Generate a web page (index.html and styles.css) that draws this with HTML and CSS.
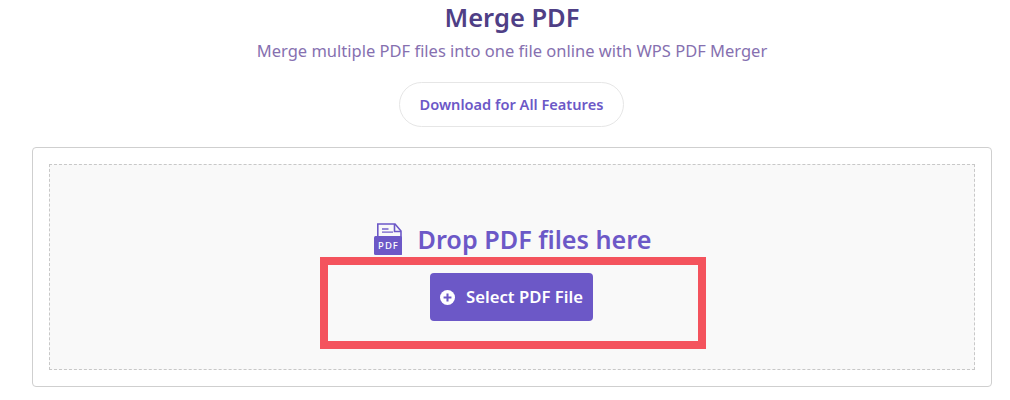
FILE: index.html
```html
<!DOCTYPE html>
<html lang="en">
<head>
<meta charset="utf-8">
<title>Merge PDF</title>
<link rel="stylesheet" href="styles.css">
</head>
<body>
<main class="page">
  <header class="intro">
    <h1 class="title">Merge PDF</h1>
    <p class="subtitle">Merge multiple PDF files into one file online with WPS PDF Merger</p>
    <a class="download" href="#">Download for All Features</a>
  </header>
  <section class="card">
    <div class="dropzone">
      <div class="drop-label">
        <svg class="pdf-icon" viewBox="0 0 28 33" aria-hidden="true">
          <path d="M3.800 14V1h17.200l6 7v24" fill="none" stroke="#6c58c7" stroke-width="1.600"/>
          <path d="M20.500 1v7.500h6.500" fill="none" stroke="#6c58c7" stroke-width="1.600"/>
          <rect x="8" y="5.300" width="6.500" height="1.400" fill="#6c58c7"/>
          <rect x="8" y="8.500" width="11" height="1.200" fill="#6c58c7"/>
          <rect x="0" y="13" width="28" height="19" rx="1.500" fill="#6c58c7"/>
          <text x="14.500" y="25.800" class="pdf-text" text-anchor="middle">PDF</text>
        </svg>
        <span class="drop-text">Drop PDF files here</span>
      </div>
      <button class="select" type="button">
        <svg class="plus" viewBox="0 0 16 16" aria-hidden="true">
          <circle cx="8" cy="8" r="8" fill="#fff"/>
          <path d="M8 3.800v8.400M3.800 8h8.400" stroke="#6c58c7" stroke-width="2.200"/>
        </svg>
        Select PDF File
      </button>
    </div>
    <div class="highlight"></div>
  </section>
</main>
</body>
</html>
```
FILE: styles.css
```css
* { box-sizing: border-box; }
html, body { margin: 0; height: 400px; overflow: hidden; background: #fff; }
body { font-family: "Noto Sans", "Open Sans", sans-serif; }
.page { width: 960px; margin-left: 32px; }
.intro { display: flex; flex-direction: column; align-items: center; height: 147px; }
.title { margin: 0; font-size: 25.500px; line-height: 34px; font-weight: 600; color: #4f3f86; }
.subtitle { margin: 5px 0 0; font-size: 16.500px; line-height: 24px; color: #8670b0; font-weight: 400; }
.download {
  display: flex; align-items: center; justify-content: center;
  width: 225px; height: 45px; margin: 19px 1px 0 0; padding-bottom: 2px;
  border: 1px solid #e6e6e6; border-radius: 23px;
  font-size: 14.600px; font-weight: 600; color: #6c58c7; text-decoration: none;
}
.card {
  position: relative;
  height: 240px; padding: 16px;
  border: 1px solid #cfcfcf; border-radius: 4px;
}
.dropzone {
  display: flex; flex-direction: column; align-items: center;
  height: 206px; padding-top: 56px;
  background: #f9f9f9; border: 1px dashed #c8c8c8;
}
.drop-label { display: flex; align-items: center; gap: 15px; height: 36px; margin-left: 2px; }
.pdf-icon { width: 28px; height: 33px; }
.pdf-text { font-size: 9.500px; font-weight: 500; letter-spacing: 1px; fill: #fff; font-family: "Noto Sans", sans-serif; }
.drop-text { font-size: 25.200px; font-weight: 600; color: #6c58c7; line-height: 36px; }
.select {
  display: flex; align-items: center; gap: 11px;
  width: 163px; height: 48px; margin: 16px 1px 0 0; padding: 0 0 2px 10px;
  border: 0; border-radius: 4px; background: #6c58c7; color: #fff;
  font-family: inherit; font-size: 16.700px; font-weight: 600;
}
.plus { width: 15px; height: 15px; margin-top: 2px; }
.highlight {
  position: absolute; left: 287px; top: 109px;
  width: 386px; height: 92px;
  border: 8px solid #f4535d;
  pointer-events: none;
}
```
